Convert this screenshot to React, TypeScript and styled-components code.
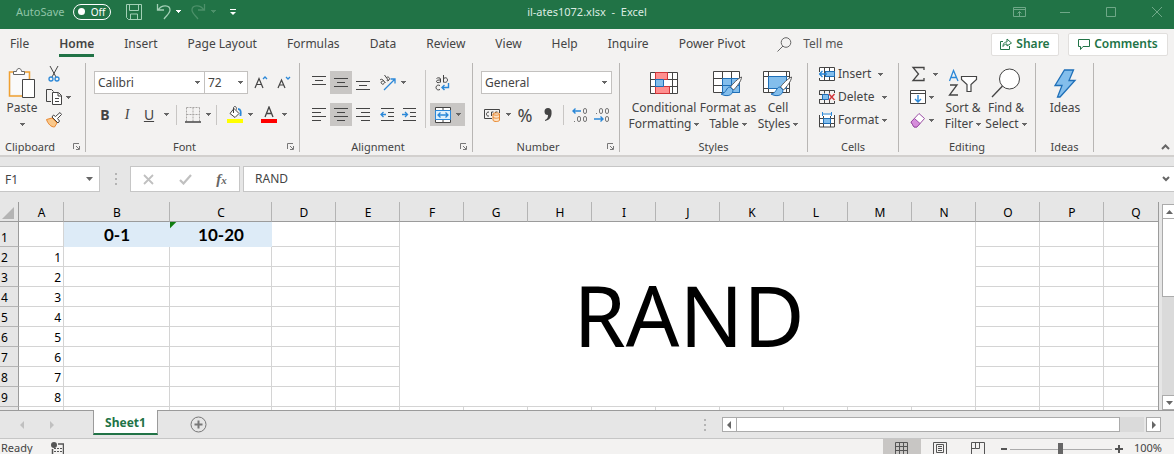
import React from 'react';
import styled, { createGlobalStyle, css } from 'styled-components';

const UI = '"Noto Sans", "Open Sans", sans-serif';
const SHEET = 'Lato, "Noto Sans", sans-serif';
const GREEN = '#217346';
const INK = '#444444';
const BLUE = '#2b88d8';
const LINE = '#d4d4d4';

const Global = createGlobalStyle`
  *, *::before, *::after { box-sizing: border-box; }
  body { margin: 0; background: #e6e6e6; font: 12px/16px ${UI}; color: ${INK}; }
  button, input, select { font: inherit; color: inherit; margin: 0; }
  button { border: 0; padding: 0; background: none; }
  svg { display: block; flex: none; }
`;

const Window = styled.div`
  display: flex;
  flex-direction: column;
  height: 100vh;
  overflow: hidden;
`;

/* ---------- title bar ---------- */
const TitleBar = styled.header`
  display: grid;
  grid-template-columns: 1fr auto 1fr;
  align-items: center;
  flex: none;
  height: 29px;
  padding-bottom: 6px;
  background: ${GREEN};
  color: #dcebe2;
  font-size: 11px;
`;
const QuickAccess = styled.div`
  display: flex;
  align-items: center;
  padding-left: 16px;
`;
const AutoSave = styled.button`
  display: flex;
  align-items: center;
  gap: 9px;
  margin-right: 15px;
  color: #8fc4a6;
`;
const Toggle = styled.span`
  display: flex;
  align-items: center;
  justify-content: space-between;
  width: 38px;
  height: 16px;
  padding: 0 5px 0 4px;
  border: 1px solid #ffffff;
  border-radius: 8px;
  color: #ffffff;
  font-size: 10px;
  &::before {
    content: '';
    width: 7px;
    height: 7px;
    border-radius: 50%;
    background: #ffffff;
  }
`;
const TitleButton = styled.button<{ $w: number }>`
  display: flex;
  align-items: center;
  gap: 5px;
  width: ${(p) => p.$w}px;
`;
const WindowButtons = styled.div`
  display: flex;
  justify-content: flex-end;
`;
const WindowButton = styled.button`
  display: grid;
  place-items: center;
  width: 46px;
  height: 22px;
  &:last-child { width: 34px; margin-left: 6px; }
`;

/* ---------- ribbon tabs ---------- */
const TabBar = styled.nav`
  display: flex;
  align-items: center;
  flex: none;
  height: 32px;
  padding: 0 6px 2px 10px;
  background: #f3f2f1;
`;
const Tabs = styled.div`
  display: flex;
  gap: 30px;
  white-space: nowrap;
`;
const Tab = styled.button<{ $active?: boolean }>`
  height: 26px;
  padding-top: 3px;
  border-bottom: 3px solid ${(p) => (p.$active ? GREEN : 'transparent')};
  font-weight: ${(p) => (p.$active ? 600 : 400)};
`;
const Search = styled.label`
  display: flex;
  align-items: center;
  gap: 11px;
  margin-left: 32px;
  input {
    width: 80px;
    padding: 0;
    border: 0;
    background: none;
    outline: 0;
  }
  input::placeholder { color: #555555; opacity: 1; }
`;
const Actions = styled.div`
  display: flex;
  gap: 9px;
  margin-left: auto;
`;
const ActionButton = styled.button<{ $w: number }>`
  display: flex;
  align-items: center;
  justify-content: center;
  gap: 4px;
  width: ${(p) => p.$w}px;
  height: 23px;
  border: 1px solid #e1dfdd;
  border-radius: 2px;
  background: #ffffff;
  color: ${GREEN};
  font-weight: 600;
`;

/* ---------- ribbon ---------- */
const Ribbon = styled.section`
  display: flex;
  flex: none;
  height: 96px;
  padding: 2px 0 3px;
  background: #f3f2f1;
  border-bottom: 2px solid #d2d0ce;
`;
const Group = styled.div<{ $w: number }>`
  display: flex;
  flex-direction: column;
  flex: none;
  width: ${(p) => p.$w}px;
  border-right: 1px solid #b8b6b4;
`;
const GroupBody = styled.div<{ $left?: number }>`
  display: flex;
  flex: none;
  height: 78px;
  padding-left: ${(p) => p.$left ?? 8}px;
`;
const GroupLabel = styled.div<{ $start?: boolean }>`
  display: flex;
  align-items: center;
  flex: none;
  height: 11px;
  padding-left: ${(p) => (p.$start ? 5 : 0)}px;
  font-size: 11px;
  line-height: 11px;
  text-align: ${(p) => (p.$start ? 'left' : 'center')};
  span { flex: 1; }
`;
const Launcher = styled.button`
  width: 16px;
  height: 8px;
  padding-left: 4px;
`;
const Stack = styled.div<{ $left?: number }>`
  display: flex;
  flex-direction: column;
  gap: 1px;
  align-items: flex-start;
  padding-left: ${(p) => p.$left ?? 0}px;
`;
const SmallButton = styled.button<{ $tight?: boolean }>`
  display: flex;
  align-items: center;
  gap: 3px;
  height: 22px;
  white-space: nowrap;
  svg:last-child:not(:first-child) { margin-left: ${(p) => (p.$tight ? 0 : 4)}px; }
`;
const TwoRows = styled.div`
  display: flex;
  flex-direction: column;
  gap: 9px;
  padding-top: 8px;
`;
const ToolRow = styled.div`
  display: flex;
  align-items: center;
  height: 23px;
`;
const Tool = styled.button<{ $w?: number; $on?: boolean }>`
  display: flex;
  align-items: center;
  justify-content: center;
  gap: 5px;
  width: ${(p) => p.$w ?? 22}px;
  height: 23px;
  font-size: 14px;
  background: ${(p) => (p.$on ? '#c8c6c4' : 'none')};
`;
const ItalicMark = styled.i`
  font-family: "Liberation Serif", serif;
`;
const Percent = styled.span`
  font-size: 18px;
`;
const Divider = styled.i<{ $tall?: boolean }>`
  flex: none;
  width: 1px;
  height: ${(p) => (p.$tall ? 58 : 20)}px;
  margin: ${(p) => (p.$tall ? '7px 4px 0 7px' : '0 7px 0 4px')};
  background: #c8c6c4;
`;
const BigButton = styled.button<{ $w: number }>`
  display: flex;
  flex-direction: column;
  align-items: center;
  width: ${(p) => p.$w}px;
  height: 72px;
  padding-top: 3px;
  white-space: nowrap;
`;
const BigIcon = styled.span`
  display: grid;
  place-items: center;
  height: 34px;
`;
const BigLine = styled.span`
  display: flex;
  align-items: center;
  gap: 3px;
  height: 16px;
`;
const Combo = styled.label<{ $w: number }>`
  display: grid;
  align-items: center;
  width: ${(p) => p.$w}px;
  height: 23px;
  margin-right: -1px;
  border: 1px solid #c3c1bf;
  background: #ffffff;
  select, input, svg { grid-area: 1 / 1; }
  select, input {
    appearance: none;
    width: 100%;
    height: 21px;
    padding: 0 3px;
    border: 0;
    border-radius: 0;
    background: none;
    outline: 0;
  }
  svg { justify-self: end; margin-right: 4px; pointer-events: none; }
`;
const Collapse = styled.button`
  align-self: flex-end;
  margin: 0 4px 2px auto;
`;

/* ---------- formula bar ---------- */
const FormulaBar = styled.section`
  display: flex;
  flex: none;
  align-items: center;
  height: 35px;
  padding-top: 9px;
`;
const barBox = css`
  height: 26px;
  border: 1px solid #c6c6c6;
  background: #ffffff;
`;
const NameBox = styled(Combo)`
  ${barBox}
  margin-right: 15px;
  border-left: 0;
  input { padding-left: 5px; }
  svg { margin-right: 6px; }
`;
const EntryButtons = styled.div`
  ${barBox}
  display: flex;
  align-items: center;
  justify-content: space-around;
  width: 110px;
  margin: 0 3px 0 13px;
`;
const FxButton = styled.button`
  font: italic 700 15px/16px "Liberation Serif", serif;
  color: #666666;
  small { font-size: 11px; }
`;
const FormulaInput = styled.label`
  ${barBox}
  display: flex;
  align-items: center;
  flex: 1;
  padding: 0 4px 0 11px;
  border-right: 0;
  input {
    flex: 1;
    min-width: 0;
    padding: 0;
    border: 0;
    outline: 0;
  }
`;

/* ---------- sheet ---------- */
const SheetArea = styled.main`
  display: flex;
  flex: 1;
  min-height: 0;
  padding-top: 10px;
`;
const GridView = styled.div`
  flex: 1;
  min-width: 0;
  overflow: hidden;
  border-right: 1px solid #9b9b9b;
  background: #ffffff;
`;
const Grid = styled.table`
  width: 1168px;
  table-layout: fixed;
  border-collapse: separate;
  border-spacing: 0;
  font-family: ${SHEET};
  color: #000000;
`;
const ColHead = styled.th`
  height: 20px;
  padding: 2px 0 0 1px;
  border-right: 1px solid #b4b4b4;
  border-bottom: 1px solid #9b9b9b;
  background: #e6e6e6;
  font: 12px/16px ${UI};
`;
const RowHead = styled.th`
  height: 20px;
  padding: 0 9px 0 0;
  border-right: 1px solid #9b9b9b;
  border-bottom: 1px solid #b4b4b4;
  background: #e6e6e6;
  font: 12px/16px ${UI};
  text-align: center;
  vertical-align: bottom;
`;
const Corner = styled(ColHead)`
  border-right-color: #9b9b9b;
  svg { margin: 0 0 0 auto; }
`;
const Cell = styled.td`
  height: 20px;
  padding: 2px 2px 0 0;
  border-right: 1px solid ${LINE};
  border-bottom: 1px solid ${LINE};
  font: 12px/16px ${UI};
  text-align: right;
`;
const TitleCell = styled(Cell)<{ $flag?: boolean }>`
  height: 25px;
  padding: 2px 0 0 1px;
  border-color: #ddebf7;
  background: ${(p) => (p.$flag ? 'linear-gradient(135deg, #107c10 4px, transparent 5px), ' : '')}#ddebf7;
  font: 700 17px/20px ${SHEET};
  text-align: center;
`;
const MergedCell = styled(Cell)`
  padding: 2px 0 0 3px;
  font: 84px/96px ${UI};
  text-align: center;
`;

const VScroll = styled.div`
  display: flex;
  flex-direction: column;
  flex: none;
  width: 12px;
  margin: 2px 0 0 3px;
  overflow: hidden;
  background: #dadada;
`;
const VThumb = styled.div`
  width: 15px;
  height: 79px;
  margin-top: -1px;
  border: 1px solid #ababab;
  background: #ffffff;
`;
const ScrollButton = styled.button`
  display: grid;
  place-items: center;
  flex: none;
  width: 15px;
  height: 15px;
  border: 1px solid #ababab;
  background: #ffffff;
`;
const VSpace = styled.div`
  flex: 1;
`;

/* ---------- sheet tabs and status bar ---------- */
const SheetBar = styled.footer`
  display: flex;
  align-items: center;
  flex: none;
  height: 28px;
  border-top: 1px solid #9b9b9b;
  background: #e6e6e6;
`;
const SheetNav = styled.div`
  display: flex;
  gap: 22px;
  width: 93px;
  padding-left: 19px;
`;
const SheetTab = styled.button`
  align-self: flex-start;
  width: 65px;
  height: 25px;
  margin-top: -1px;
  padding-top: 3px;
  border: solid #9b9b9b;
  border-width: 0 1px;
  border-bottom: 2px solid ${GREEN};
  background: #ffffff;
  color: ${GREEN};
  font-weight: 700;
`;
const AddSheet = styled.button`
  margin-left: 32px;
`;
const HScroll = styled.div`
  display: flex;
  align-items: center;
  width: 40%;
  margin-left: auto;
  padding-right: 13px;
`;
const HTrack = styled.div`
  flex: 1;
  height: 15px;
  margin: 0 2px 0 -1px;
  background: #dadada;
`;
const HThumb = styled.div`
  width: 94%;
  height: 15px;
  border: 1px solid #ababab;
  background: #ffffff;
`;
const Grip = styled.div`
  flex: none;
  width: 18px;
`;
const StatusBar = styled.footer`
  display: flex;
  align-items: flex-start;
  flex: none;
  height: 16px;
  overflow: hidden;
  border-top: 1px solid #c6c6c6;
  background: #f3f2f1;
  font-size: 11px;
  line-height: 18px;
`;
const StatusLeft = styled.div`
  display: flex;
  gap: 18px;
  padding-left: 1px;
  svg { margin-top: 3px; }
`;
const StatusRight = styled.div`
  display: flex;
  margin-left: auto;
  padding-right: 12px;
`;
const ViewButton = styled.button<{ $on?: boolean }>`
  display: grid;
  justify-items: center;
  align-items: start;
  width: 38px;
  height: 20px;
  padding-top: 3px;
  background: ${(p) => (p.$on ? '#c8c6c4' : 'none')};
`;
const Zoom = styled.div`
  display: flex;
  align-items: center;
  gap: 3px;
  height: 20px;
  margin: 0 11px 0 4px;
`;
const ZoomRange = styled.input`
  appearance: none;
  width: 102px;
  height: 12px;
  background: linear-gradient(#ababab, #ababab) center / 100% 1px no-repeat;
  &::-webkit-slider-thumb {
    appearance: none;
    width: 5px;
    height: 12px;
    background: #666666;
  }
`;

/* ---------- icons ---------- */
type SvgProps = { w: number; h: number; children: React.ReactNode; stroke?: string };
const Svg = ({ w, h, children, stroke = INK }: SvgProps) => (
  <svg width={w} height={h} viewBox={`0 0 ${w} ${h}`} fill="none" stroke={stroke} aria-hidden="true">
    {children}
  </svg>
);
const Caret = ({ c = '#666666' }: { c?: string }) => (
  <Svg w={5} h={3} stroke="none"><path d="M0 0h5v1H4v1H3v1H2V2H1V1H0z" fill={c} /></Svg>
);
const Arrow = ({ dir, c = '#666666' }: { dir: 'up' | 'down' | 'left' | 'right'; c?: string }) => {
  const d = { up: 'M0 6h7L3.5 2z', down: 'M0 2h7L3.5 6z', left: 'M5 0v8L1 4z', right: 'M2 0v8l4-4z' }[dir];
  return <Svg w={7} h={8} stroke="none"><path d={d} fill={c} /></Svg>;
};
const LauncherIcon = () => (
  <Svg w={7} h={7} stroke="#777777"><path d="M.5 6V.5H6M3 3l3 3M6.5 3v3.500H3" /></Svg>
);
const Lines = ({ rows }: { rows: [number, number, number][] }) => (
  <Svg w={15} h={16}>
    {rows.map(([x, y, w]) => <path key={y} d={`M${x} ${y + 0.5}h${w}`} />)}
  </Svg>
);
const IndentIcon = ({ out }: { out?: boolean }) => (
  <Svg w={15} h={14}>
    <path d="M1 .5h13M8 4.500h6M8 8.500h6M1 12.500h13" />
    <path stroke={BLUE} strokeWidth="1.3" d={out ? 'M6 6.500H1M3.500 4L1 6.500 3.500 9' : 'M0 6.500h5M3 4l2.500 2.500L3 9'} />
  </Svg>
);
const PasteIcon = () => (
  <Svg w={28} h={32}>
    <path d="M6 5H1.500v24H14M16 5h5.500v7" stroke="#f0a030" strokeWidth="1.5" />
    <path d="M3 6.500h17v6h-6v15H3z" fill="#fafafa" stroke="none" />
    <path d="M5.500 7.500v-3h3c0-4 5-4 5 0h3v3z" fill="#ffffff" stroke="#666666" />
    <path d="M14.500 12.500h12v18h-12z" fill="#ffffff" />
  </Svg>
);
const CutIcon = () => (
  <Svg w={16} h={16}>
    <path d="M4 0l6 11M12 0L6 11" />
    <circle cx="5" cy="13" r="2" stroke={BLUE} strokeWidth="1.3" /><circle cx="11" cy="13" r="2" stroke={BLUE} strokeWidth="1.3" />
  </Svg>
);
const CopyIcon = () => (
  <Svg w={17} h={16}>
    <path d="M5 12.500H.5V.5h5l2 2" />
    <path d="M6.500 3.500h6l3 3v9h-9zM12 4v3h3.500M9 9.500h4M9 12.500h4" fill="#ffffff" />
  </Svg>
);
const PainterIcon = () => (
  <Svg w={17} h={16}>
    <path d="M.5 7.500L6 6l5 5-2.500 4C5 15 2 12 .5 7.500z" fill="#f9c88b" stroke="#e8862e" />
    <path d="M6 5l6 6 1.500-2-2-2.500 4-4-1.500-2-4.500 4L7.500 3z" fill="#ffffff" />
  </Svg>
);
const GrowIcon = ({ down }: { down?: boolean }) => (
  <Svg w={14} h={14}>
    {down
      ? <path d="M1 12L4.500 4l3.500 8M2.300 9h4.400" strokeWidth="1.2" />
      : <path d="M1 12L5 2.500 9 12M2.500 8.500h5" strokeWidth="1.2" />}
    <path d={down ? 'M9 1l2 2 2-2' : 'M9 3l2-2 2 2'} stroke={BLUE} strokeWidth="1.3" />
  </Svg>
);
const BorderIcon = () => (
  <Svg w={16} h={16}>
    <path d="M1.500.5h13M1.500 7.500h13M1.500.5v14M8 .5v14M14.500.5v14" strokeDasharray="2 1" stroke="#a8a6a4" />
    <path d="M0 15h16" strokeWidth="1.5" />
  </Svg>
);
const FillIcon = () => (
  <Svg w={16} h={17}>
    <path d="M7 2.500l5 5-4 4-5-4zM6.500 7V1.500c1.500-2 3-1 3 2" fill="#ffffff" />
    <path d="M11 3c3 0 3 3 2.500 7" stroke={BLUE} strokeWidth="1.8" />
    <path d="M0 15h16" stroke="#ffff00" strokeWidth="4" />
  </Svg>
);
const FontColorIcon = () => (
  <Svg w={16} h={17}>
    <path d="M4 11L8 1l4 10M5.500 7.500h5" strokeWidth="1.3" />
    <path d="M0 15h16" stroke="#ff0000" strokeWidth="4" />
  </Svg>
);
const OrientIcon = () => (
  <Svg w={17} h={17}>
    <g stroke="#444444">
      <path d="M1 6c1-1 2-1 3 0l2.500 3M4.500 7c-2 0-3 1-2 2.500s2.500.5 3-1" />
      <path d="M5.500 1l4 5.500M7.500 3.500c2-1.500 4 1 2.500 2.500s-2 .5-2.500 0" />
    </g>
    <path d="M5 16L16 5M11.500 5H16v4.500" stroke={BLUE} strokeWidth="1.3" />
  </Svg>
);
const WrapIcon = () => (
  <Svg w={15} h={16}>
    <path d="M1.500 3.500c1-1 4-1 4 .5v3.500M5.500 5c-2 0-4 0-4 1.500s3 1.500 4 0M8.500 0v7.500M8.500 4c1-2 4-1.500 4 1s-3 3-4 1.500M5 10.500c-2-1-4 0-4 2s2 3 4 2" />
    <path d="M13.500 8v4.500H7M9.500 10L7 12.500 9.500 15" stroke={BLUE} strokeWidth="1.4" />
  </Svg>
);
const MergeIcon = () => (
  <Svg w={16} h={16}>
    <path d="M.5.5h15v15H.5zM8 .5v3M8 12.500v3" fill="#ffffff" />
    <path d="M.5 3.500h15v9H.5z" fill="#dff0fb" stroke={BLUE} />
    <path d="M3 8h10M5.500 5.500L3 8l2.500 2.500M10.500 5.500L13 8l-2.500 2.500" stroke={BLUE} strokeWidth="1.3" />
  </Svg>
);
const CurrencyIcon = () => (
  <Svg w={17} h={14}>
    <path d="M8 10.500H.5V1.500h15V5M5 4c-2 0-2.500 1-2.500 2s.5 2.500 2.500 2M7.500 8V4h2M11.500 5V4h2" />
    <path d="M9 6c0-1.500 6.500-1.500 6.500 0v6c0 2-6.500 2-6.500 0zM9 6c0 1.500 6.500 1.500 6.500 0M9 9c0 1.500 6.500 1.500 6.500 0" fill="#ffe3c2" stroke="#e8862e" />
  </Svg>
);
const DecimalIcon = ({ less }: { less?: boolean }) => (
  <Svg w={16} h={16}>
    <g stroke="#777777">
      {less ? (
        <><rect x="5.500" y="1.500" width="3" height="5" rx="1.5" /><rect x="11.500" y="1.500" width="3" height="5" rx="1.5" /><rect x="11.500" y="9.500" width="3" height="5" rx="1.5" /><path d="M2 6.500h1" /></>
      ) : (
        <><rect x="11.500" y="1.500" width="3" height="5" rx="1.5" /><rect x="5.500" y="9.500" width="3" height="5" rx="1.5" /><rect x="11.500" y="9.500" width="3" height="5" rx="1.5" /><path d="M2 14.500h1" /></>
      )}
    </g>
    <path d={less ? 'M0 12h9M6.500 9.500L9 12l-2.500 2.500' : 'M9 4H1M3.500 1.500L1 4l2.500 2.500'} stroke={BLUE} strokeWidth="1.4" />
  </Svg>
);
const Brush = ({ x }: { x: number }) => (
  <g transform={`translate(${x} 7)`}>
    <path d="M20.500 1c-3 1-9 7-11 10l3 3c3-3 8-9 8-13z" fill="#ffffff" stroke="#555555" />
    <path d="M9 11c-4 0-3 6-9 7 5 3 12 2 12-4z" fill="#83beec" stroke="#1e6fb8" />
  </g>
);
const CondIcon = () => (
  <Svg w={30} h={24}>
    <path d="M1.500 1.500h27v21h-27zM6.500 1.500v21M1.500 8.500h27M1.500 15.500h27M23.500 1.500v21" fill="#ffffff" />
    <path d="M6.500 1.500h12v7h-12zM6.500 15.500h14v7h-14z" fill="#ff8f8f" stroke="#d13438" />
    <path d="M6.500 8.500h8v7h-8z" fill="#83beec" stroke="#1e6fb8" />
  </Svg>
);
const TableIcon = () => (
  <Svg w={32} h={28}>
    <path d="M1.500 2.500h26v21h-26zM10.500 2.500v21M19.500 2.500v21M1.500 9.500h26M1.500 16.500h26" fill="#ffffff" />
    <path d="M10.500 9.500h17v14h-17zM19.500 9.500v14M10.500 16.500h17" fill="#83beec" stroke="#1e6fb8" />
    <Brush x={9} />
  </Svg>
);
const CellStyleIcon = () => (
  <Svg w={32} h={28}>
    <path d="M1.500 2.500h26v21h-26zM6.500 2.500v21M1.500 7.500h26M1.500 19.500h26M24.500 2.500v21" fill="#ffffff" />
    <path d="M6.500 7.500h18v12h-18z" fill="#83beec" stroke="#1e6fb8" />
    <Brush x={9} />
  </Svg>
);
const InsertIcon = () => (
  <Svg w={16} h={15}>
    <path d="M.5 5V.5h15v13H.5V11M5.500.5v13M10.500.5v13M6 4.500h9M6 9.500h9" fill="#ffffff" />
    <path d="M6.500 4.500h9v5h-9z" fill="#83beec" stroke="#1e6fb8" />
    <path d="M8 7H.5M3.500 4L.5 7l3 3" stroke={BLUE} strokeWidth="1.4" />
  </Svg>
);
const DeleteIcon = () => (
  <Svg w={16} h={15}>
    <path d="M.5 4V.5h15V3M.5 9.500v4h15V11M5.500.5v3M10.500.5v3M5.500 10v3.500M10.500 10v3.500M0 4.500h6M0 9.500h6" />
    <path d="M3.500 4.500h6v5h-6z" fill="#83beec" stroke="#1e6fb8" />
    <path d="M10 4l5.500 6M15.500 4L10 10" stroke="#d13438" strokeWidth="1.4" />
  </Svg>
);
const FormatIcon = () => (
  <Svg w={16} h={16}>
    <path d="M.5 3v12h15V3M4.500 4v11M11.500 4v11M.5 6.500h15M.5 11.500h15" fill="#ffffff" />
    <path d="M4.500 6.500h7v5h-7z" fill="#83beec" stroke="#1e6fb8" />
    <path d="M3.500 0v4M12.500 0v4M3.500 2h9" stroke={BLUE} />
  </Svg>
);
const SumIcon = () => <Svg w={16} h={16}><path d="M14 4V1.500H3L8.500 8 3 14.500h11V12" strokeWidth="1.3" /></Svg>;
const FillDownIcon = () => (
  <Svg w={16} h={14}>
    <path d="M.5.5h15v13H.5zM.5 3.500h15" fill="#ffffff" />
    <path d="M8 5v7M5 9l3 3 3-3" stroke={BLUE} strokeWidth="1.4" />
  </Svg>
);
const EraserIcon = () => (
  <Svg w={16} h={15} stroke="#9b4fa5">
    <path d="M1 9l8-8.500 5.500 5L7 14H4z" fill="#ffffff" />
    <path d="M1 9l3.500-3.500L10 10.500 7 14H4z" fill="#d68ddb" />
  </Svg>
);
const SortIcon = () => (
  <Svg w={30} h={28}>
    <path d="M1.500 12L5.500 1.500 10 12M3 8.500h5.500" stroke={BLUE} strokeWidth="1.3" />
    <path d="M2 16h7L1.500 26H10" strokeWidth="1.3" />
    <path d="M13.500 7.500h15v3l-5.500 5v7h-4v-7l-5.500-5z" fill="#ffffff" strokeWidth="1.2" />
  </Svg>
);
const FindIcon = () => (
  <Svg w={30} h={30}>
    <circle cx="18.500" cy="11" r="10" fill="#ffffff" /><path d="M11.500 18L1 29" strokeWidth="1.3" />
  </Svg>
);
const IdeasIcon = () => (
  <Svg w={24} h={29} stroke="#1e6fb8">
    <path d="M11.500 1h9L16 11.500h6L7 28H4.500l4.500-11.500H2z" fill="#83beec" strokeWidth="1.3" />
  </Svg>
);
const UndoIcon = ({ flip }: { flip?: boolean }) => (
  <Svg w={15} h={17} stroke={flip ? '#4c9069' : '#a3d0b6'}>
    <path transform={flip ? 'translate(15 0) scale(-1 1)' : undefined} d="M1.500 1v6H8M2 7c4-6 12-5 12 0 0 3-3 5-6 9" strokeWidth="1.3" />
  </Svg>
);

const tabs = ['File', 'Home', 'Insert', 'Page Layout', 'Formulas', 'Data', 'Review', 'View', 'Help', 'Inquire', 'Power Pivot'];
const columns = ['A', 'B', 'C', 'D', 'E', 'F', 'G', 'H', 'I', 'J', 'K', 'L', 'M', 'N', 'O', 'P', 'Q'];
const wide: Record<string, number> = { A: 45, B: 106, C: 102 };
const blanks = (names: string[], row: number) => names.map((c) => <Cell key={c + row} />);

const Worksheet = () => (
  <Grid>
    <colgroup>
      <col width={19} />
      {columns.map((c) => <col key={c} width={wide[c] ?? 64} />)}
    </colgroup>
    <thead>
      <tr>
        <Corner aria-label="Select all"><Svg w={16} h={12} stroke="none"><path d="M12 0v12H0z" fill="#b4b4b4" /></Svg></Corner>
        {columns.map((c) => <ColHead key={c} scope="col">{c}</ColHead>)}
      </tr>
    </thead>
    <tbody>
      <tr>
        <RowHead scope="row">1</RowHead>
        <Cell />
        <TitleCell>0-1</TitleCell>
        <TitleCell $flag>10-20</TitleCell>
        {blanks(['D', 'E'], 1)}
        <MergedCell colSpan={9} rowSpan={9}>RAND</MergedCell>
        {blanks(['O', 'P', 'Q'], 1)}
      </tr>
      {[2, 3, 4, 5, 6, 7, 8, 9].map((r) => (
        <tr key={r}>
          <RowHead scope="row">{r}</RowHead>
          <Cell>{r - 1}</Cell>
          {blanks(['B', 'C', 'D', 'E', 'O', 'P', 'Q'], r)}
        </tr>
      ))}
      <tr><RowHead />{blanks(columns, 10)}</tr>
    </tbody>
  </Grid>
);

export default function App() {
  return (
    <Window>
      <Global />
      <TitleBar>
        <QuickAccess>
          <AutoSave>AutoSave <Toggle>Off</Toggle></AutoSave>
          <TitleButton $w={30} aria-label="Save">
            <Svg w={16} h={16} stroke="#a3d0b6"><path d="M.5.5h15v15h-13l-2-2zM3.500.5v6h9v-6M4.500 15v-5h7v5" /></Svg>
          </TitleButton>
          <TitleButton $w={35} aria-label="Undo"><UndoIcon /><Caret c="#ffffff" /></TitleButton>
          <TitleButton $w={39} aria-label="Redo"><UndoIcon flip /><Caret c="#4c9069" /></TitleButton>
          <TitleButton $w={8} aria-label="Customize toolbar">
            <Svg w={6} h={6} stroke="#ffffff"><path d="M0 .5h6" /><path d="M0 3h6L3 6z" fill="#ffffff" stroke="none" /></Svg>
          </TitleButton>
        </QuickAccess>
        <span>il-ates1072.xlsx&nbsp; -&nbsp; Excel</span>
        <WindowButtons>
          <WindowButton aria-label="Ribbon display options"><Svg w={13} h={10} stroke="#6fa888"><path d="M.5.5h12v9H.5zM.5 2.500h12M6.500 9V4.500M4.500 6.500l2-2 2 2" /></Svg></WindowButton>
          <WindowButton aria-label="Minimize"><Svg w={10} h={10} stroke="#6fa888"><path d="M0 5.500h10" /></Svg></WindowButton>
          <WindowButton aria-label="Maximize"><Svg w={10} h={10} stroke="#6fa888"><path d="M.5.5h9v9h-9z" /></Svg></WindowButton>
          <WindowButton aria-label="Close"><Svg w={10} h={10} stroke="#6fa888"><path d="M0 0l10 10M10 0L0 10" /></Svg></WindowButton>
        </WindowButtons>
      </TitleBar>

      <TabBar>
        <Tabs>{tabs.map((t) => <Tab key={t} $active={t === 'Home'}>{t}</Tab>)}</Tabs>
        <Search>
          <Svg w={15} h={15} stroke="#666666"><circle cx="9" cy="5.500" r="4.8" /><path d="M6 9L.5 14.500" /></Svg>
          <input aria-label="Tell me" placeholder="Tell me" />
        </Search>
        <Actions>
          <ActionButton $w={68}>
            <Svg w={12} h={12} stroke={GREEN}><path d="M3 3.500H.5v8h9V8M3 8.500C3 5 5 4 7 4V1l4.500 4L7 8V6C5 6 4 7 3 8.500z" /></Svg>
            Share
          </ActionButton>
          <ActionButton $w={100}>
            <Svg w={12} h={11} stroke={GREEN}><path d="M.5.5h11v7H5l-2.500 3v-3h-2z" /></Svg>
            Comments
          </ActionButton>
        </Actions>
      </TabBar>

      <Ribbon>
        <Group $w={86}>
          <GroupBody $left={4}>
            <BigButton $w={36}>
              <BigIcon><PasteIcon /></BigIcon>
              <BigLine>Paste</BigLine>
              <BigLine><Caret /></BigLine>
            </BigButton>
            <Stack $left={6}>
              <SmallButton aria-label="Cut"><CutIcon /></SmallButton>
              <SmallButton $tight aria-label="Copy"><CopyIcon /><Caret /></SmallButton>
              <SmallButton aria-label="Format painter"><PainterIcon /></SmallButton>
            </Stack>
          </GroupBody>
          <GroupLabel $start><span>Clipboard</span><Launcher aria-label="Clipboard options"><LauncherIcon /></Launcher></GroupLabel>
        </Group>

        <Group $w={214}>
          <GroupBody>
            <TwoRows>
              <ToolRow>
                <Combo $w={111}><select aria-label="Font"><option>Calibri</option></select><Caret /></Combo>
                <Combo $w={44}><select aria-label="Font size"><option>72</option></select><Caret /></Combo>
                <Tool $w={28} aria-label="Increase font size"><GrowIcon /></Tool>
                <Tool $w={18} aria-label="Decrease font size"><GrowIcon down /></Tool>
              </ToolRow>
              <ToolRow>
                <Tool><b>B</b></Tool>
                <Tool><ItalicMark>I</ItalicMark></Tool>
                <Tool><u>U</u></Tool>
                <Tool $w={12} aria-label="Underline options"><Caret /></Tool>
                <Divider />
                <Tool $w={28} aria-label="Borders"><BorderIcon /><Caret /></Tool>
                <Divider />
                <Tool $w={32} aria-label="Fill colour"><FillIcon /><Caret /></Tool>
                <Tool $w={36} aria-label="Font colour"><FontColorIcon /><Caret /></Tool>
              </ToolRow>
            </TwoRows>
          </GroupBody>
          <GroupLabel><span>Font</span><Launcher aria-label="Font options"><LauncherIcon /></Launcher></GroupLabel>
        </Group>

        <Group $w={173}>
          <GroupBody>
            <TwoRows>
              <ToolRow>
                <Tool aria-label="Top align"><Lines rows={[[0, 1, 14], [3, 5, 8], [0, 9, 14]]} /></Tool>
                <Tool $on aria-label="Middle align"><Lines rows={[[0, 3, 14], [3, 7, 8], [0, 11, 14]]} /></Tool>
                <Tool aria-label="Bottom align"><Lines rows={[[0, 6, 14], [3, 10, 8], [0, 14, 14]]} /></Tool>
                <Tool $w={36} aria-label="Orientation"><OrientIcon /><Caret /></Tool>
              </ToolRow>
              <ToolRow>
                <Tool aria-label="Align left"><Lines rows={[[0, 1, 14], [0, 5, 9], [0, 9, 14], [0, 13, 9]]} /></Tool>
                <Tool $on aria-label="Centre"><Lines rows={[[0, 1, 14], [3, 5, 8], [0, 9, 14], [3, 13, 8]]} /></Tool>
                <Tool aria-label="Align right"><Lines rows={[[0, 1, 14], [5, 5, 9], [0, 9, 14], [5, 13, 9]]} /></Tool>
                <Tool $w={26} aria-label="Decrease indent"><IndentIcon out /></Tool>
                <Tool $w={18} aria-label="Increase indent"><IndentIcon /></Tool>
              </ToolRow>
            </TwoRows>
            <Divider $tall />
            <TwoRows>
              <ToolRow><Tool $w={25} aria-label="Wrap text"><WrapIcon /></Tool></ToolRow>
              <ToolRow><Tool $w={35} $on aria-label="Merge and centre"><MergeIcon /><Caret /></Tool></ToolRow>
            </TwoRows>
          </GroupBody>
          <GroupLabel><span>Alignment</span><Launcher aria-label="Alignment options"><LauncherIcon /></Launcher></GroupLabel>
        </Group>

        <Group $w={147}>
          <GroupBody>
            <TwoRows>
              <ToolRow><Combo $w={131}><select aria-label="Number format"><option>General</option></select><Caret /></Combo></ToolRow>
              <ToolRow>
                <Tool $w={32} aria-label="Accounting format"><CurrencyIcon /><Caret /></Tool>
                <Tool $w={24}><Percent>%</Percent></Tool>
                <Tool aria-label="Comma style"><Svg w={8} h={14} stroke="none"><path d="M4 0a3.500 3.500 0 0 0 0 7c0 3-1 4-3 5v1c5-1 7-5 6.500-9A3.500 3.500 0 0 0 4 0z" fill={INK} /></Svg></Tool>
                <Divider />
                <Tool $w={18} aria-label="Increase decimal"><DecimalIcon /></Tool>
                <Tool $w={26} aria-label="Decrease decimal"><DecimalIcon less /></Tool>
              </ToolRow>
            </TwoRows>
          </GroupBody>
          <GroupLabel><span>Number</span><Launcher aria-label="Number options"><LauncherIcon /></Launcher></GroupLabel>
        </Group>

        <Group $w={188}>
          <GroupBody>
            <BigButton $w={72}><BigIcon><CondIcon /></BigIcon><BigLine>Conditional</BigLine><BigLine>Formatting <Caret /></BigLine></BigButton>
            <BigButton $w={56}><BigIcon><TableIcon /></BigIcon><BigLine>Format as</BigLine><BigLine>Table <Caret /></BigLine></BigButton>
            <BigButton $w={44}><BigIcon><CellStyleIcon /></BigIcon><BigLine>Cell</BigLine><BigLine>Styles <Caret /></BigLine></BigButton>
          </GroupBody>
          <GroupLabel><span>Styles</span></GroupLabel>
        </Group>

        <Group $w={91}>
          <GroupBody $left={11}>
            <Stack>
              <SmallButton><InsertIcon />Insert<Caret /></SmallButton>
              <SmallButton><DeleteIcon />Delete<Caret /></SmallButton>
              <SmallButton $tight><FormatIcon />Format<Caret /></SmallButton>
            </Stack>
          </GroupBody>
          <GroupLabel><span>Cells</span></GroupLabel>
        </Group>

        <Group $w={137}>
          <GroupBody $left={11}>
            <Stack>
              <SmallButton aria-label="AutoSum"><SumIcon /><Caret /></SmallButton>
              <SmallButton $tight aria-label="Fill"><FillDownIcon /><Caret /></SmallButton>
              <SmallButton $tight aria-label="Clear"><EraserIcon /><Caret /></SmallButton>
            </Stack>
            <BigButton $w={50}><BigIcon><SortIcon /></BigIcon><BigLine>Sort &amp;</BigLine><BigLine>Filter <Caret /></BigLine></BigButton>
            <BigButton $w={36}><BigIcon><FindIcon /></BigIcon><BigLine>Find &amp;</BigLine><BigLine>Select <Caret /></BigLine></BigButton>
          </GroupBody>
          <GroupLabel><span>Editing</span></GroupLabel>
        </Group>

        <Group $w={58}>
          <GroupBody>
            <BigButton $w={42}><BigIcon><IdeasIcon /></BigIcon><BigLine>Ideas</BigLine></BigButton>
          </GroupBody>
          <GroupLabel><span>Ideas</span></GroupLabel>
        </Group>
        <Collapse aria-label="Collapse ribbon"><Svg w={9} h={6} stroke="#666666"><path d="M1 5l3.500-3.500L8 5" strokeWidth="2" /></Svg></Collapse>
      </Ribbon>

      <FormulaBar>
        <NameBox $w={100}><input aria-label="Name box" defaultValue="F1" /><Arrow dir="down" /></NameBox>
        <Svg w={2} h={12} stroke="none"><path d="M0 0h2v2H0zM0 5h2v2H0zM0 10h2v2H0z" fill="#b4b4b4" /></Svg>
        <EntryButtons>
          <button aria-label="Cancel"><Svg w={11} h={11} stroke="#c0c0c0"><path d="M1 1l9 9M10 1l-9 9" strokeWidth="1.8" /></Svg></button>
          <button aria-label="Enter"><Svg w={13} h={11} stroke="#c0c0c0"><path d="M1 6l3.500 3.500L12 1" strokeWidth="2.2" /></Svg></button>
          <FxButton aria-label="Insert function">f<small>x</small></FxButton>
        </EntryButtons>
        <FormulaInput>
          <input aria-label="Formula bar" defaultValue="RAND" />
          <Svg w={8} h={6} stroke="#666666"><path d="M1 1l3 3 3-3" strokeWidth="2" /></Svg>
        </FormulaInput>
      </FormulaBar>

      <SheetArea>
        <GridView><Worksheet /></GridView>
        <VScroll>
          <ScrollButton aria-label="Scroll up"><Arrow dir="up" /></ScrollButton>
          <VThumb />
          <VSpace />
          <ScrollButton aria-label="Scroll down"><Arrow dir="down" /></ScrollButton>
        </VScroll>
      </SheetArea>

      <SheetBar>
        <SheetNav>
          <button aria-label="Previous sheet"><Arrow dir="left" c="#c0c0c0" /></button>
          <button aria-label="Next sheet"><Arrow dir="right" c="#c0c0c0" /></button>
        </SheetNav>
        <SheetTab>Sheet1</SheetTab>
        <AddSheet aria-label="New sheet"><Svg w={17} h={17} stroke="#777777"><circle cx="8.500" cy="8.500" r="7.5" /><path d="M8.500 4.500v8M4.500 8.500h8" strokeWidth="2" /></Svg></AddSheet>
        <HScroll>
          <Grip><Svg w={2} h={12} stroke="none"><path d="M0 0h2v2H0zM0 5h2v2H0zM0 10h2v2H0z" fill="#b4b4b4" /></Svg></Grip>
          <ScrollButton aria-label="Scroll left"><Arrow dir="left" /></ScrollButton>
          <HTrack><HThumb /></HTrack>
          <ScrollButton aria-label="Scroll right"><Arrow dir="right" /></ScrollButton>
        </HScroll>
      </SheetBar>

      <StatusBar>
        <StatusLeft>
          <span>Ready</span>
          <Svg w={13} h={13} stroke="#555555"><circle cx="3" cy="3" r="3" fill="#555555" stroke="none" /><path d="M7 2h5.500v11M1.500 7v6" strokeWidth="1.5" /><path d="M3 6.500h8M3 9.500h8M3 12.500h8" strokeDasharray="2 1" /></Svg>
        </StatusLeft>
        <StatusRight>
          <ViewButton $on aria-label="Normal view"><Svg w={13} h={13} stroke="#555555"><path d="M.5.5h12v12H.5zM4.500.5v12M8.500.5v12M.5 4.500h12M.5 8.500h12" /></Svg></ViewButton>
          <ViewButton aria-label="Page layout view"><Svg w={14} h={13} stroke="#555555"><path d="M.5.5h13v12H.5zM3.500 2.500h7v8h-7zM5 4.500h4M5 6.500h4M5 8.500h4" /></Svg></ViewButton>
          <ViewButton aria-label="Page break view"><Svg w={14} h={13} stroke="#555555"><path d="M.5 13V.5h13V13M4.500.5v6h4v-6M.5 6.500h4" /></Svg></ViewButton>
          <Zoom>
            <Svg w={6} h={8} stroke="#555555"><path d="M0 4h6" strokeWidth="2" /></Svg>
            <ZoomRange type="range" aria-label="Zoom" min={0} max={200} defaultValue={100} />
            <Svg w={8} h={8} stroke="#555555"><path d="M0 4h8M4 0v8" strokeWidth="2" /></Svg>
          </Zoom>
          <span>100%</span>
        </StatusRight>
      </StatusBar>
    </Window>
  );
}
